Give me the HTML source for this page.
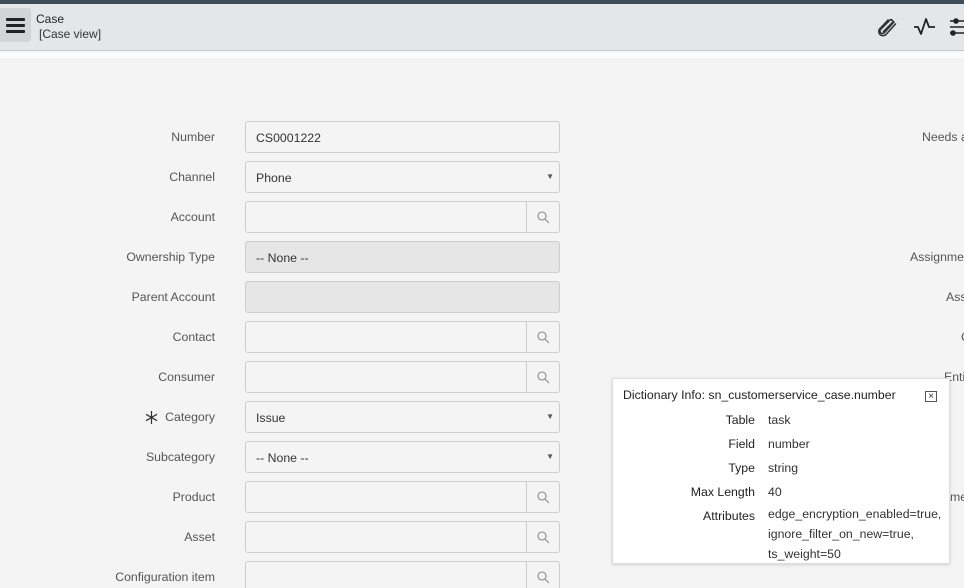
<!DOCTYPE html>
<html><head><meta charset="utf-8">
<style>
*{box-sizing:border-box;margin:0;padding:0}
html{width:964px;height:588px;overflow:hidden}
body{width:964px;height:588px;overflow:hidden;background:#f4f4f4;font-family:"Liberation Sans",sans-serif;position:relative;color:#444}
.top{position:absolute;left:0;top:0;width:964px;height:4px;background:#3f4d5b}
.hdr{position:absolute;left:0;top:4px;width:964px;height:47px;background:#e4e7ea;border-bottom:1px solid #c8c8c8}
.white{position:absolute;left:0;top:52px;width:964px;height:6px;background:#fbfbfb}
.ham{position:absolute;left:0;top:8px;width:31px;height:34px;background:#d2d4d6;border-radius:0 3px 3px 0}
.ham i{position:absolute;left:6px;width:19px;height:3px;background:#222;border-radius:1px}
.t1{position:absolute;left:36px;top:12px;font-size:12px;color:#222}
.t2{position:absolute;left:39px;top:27px;font-size:12px;color:#333}
.lbl{position:absolute;right:749px;font-size:12.3px;color:#555;text-align:right;white-space:nowrap}
.f{position:absolute;left:245px;width:315px;height:32px;border:1px solid #ccc;border-radius:3px;background:#f4f4f4;font-size:12.3px;color:#333;padding:9px 0 0 10px}
.f.ro{background:#e6e6e6}
.f .arr{position:absolute;right:5px;top:10px;font-size:8px;color:#555}
.f .sb{position:absolute;right:0;top:0;width:33px;height:30px;border-left:1px solid #ccc}
.rl{position:absolute;font-size:12.3px;color:#555;white-space:nowrap}
.rc{position:absolute;left:0;top:0;width:964px;height:588px;overflow:hidden}
.pop{position:absolute;left:612px;top:378px;width:338px;height:186px;background:#fff;border:1px solid #ddd;box-shadow:0 1px 3px rgba(0,0,0,.15)}
.pop .h{position:absolute;left:10px;top:9px;font-size:12.3px;color:#222}
.pop .x{position:absolute;left:312px;top:12px;width:12px;height:11px;border:1px solid #555;font-size:10px;line-height:9px;text-align:center;color:#333}
.pk{position:absolute;right:194px;font-size:12.3px;color:#222;text-align:right}
.pv{position:absolute;left:155px;font-size:12.3px;color:#333;line-height:20px}
</style></head><body>
<div class="top"></div>
<div class="hdr"></div>
<div class="white"></div>
<div class="ham"><i style="top:10px"></i><i style="top:16px"></i><i style="top:22px"></i></div>
<div class="t1">Case</div>
<div class="t2">[Case view]</div>
<svg style="position:absolute;left:876px;top:16px" width="24" height="24" viewBox="0 0 24 24" fill="none" stroke="#333" stroke-width="1.6" stroke-linecap="round"><path d="M18 6 L8 17 a2.5 2.5 0 0 1 -3.5 -3.5 L14 4 a1.8 1.8 0 0 1 2.5 2.5 L7.5 15.5"/><path d="M19.5 8 L10 18.5 a4 4 0 0 1 -6 -6 L12 4"/></svg>
<svg style="position:absolute;left:913px;top:16px" width="24" height="22" viewBox="0 0 24 22" fill="none" stroke="#222" stroke-width="1.8" stroke-linejoin="round"><path d="M1 11 L5 11 L8 18 L13 3 L16 11 L22 11"/></svg>
<svg style="position:absolute;left:950px;top:16px" width="14" height="22" viewBox="0 0 14 22" stroke="#222" stroke-width="1.6"><path d="M0 5 H14 M0 11 H14 M0 17 H14"/><circle cx="6" cy="5" r="2" fill="#222"/><circle cx="3" cy="17" r="2" fill="#222"/></svg>

<div class="lbl" style="top:130px">Number</div>
<div class="f" style="top:121px">CS0001222</div>
<div class="lbl" style="top:170px">Channel</div>
<div class="f" style="top:161px">Phone<span class="arr">▼</span></div>
<div class="lbl" style="top:210px">Account</div>
<div class="f" style="top:201px"><span class="sb"><svg style="position:absolute;left:10px;top:9px" width="13" height="13" viewBox="0 0 13 13" fill="none" stroke="#888" stroke-width="1.1"><circle cx="5" cy="5" r="4"/><path d="M8 8 L12 12"/></svg></span></div>
<div class="lbl" style="top:250px">Ownership Type</div>
<div class="f ro" style="top:241px">-- None --</div>
<div class="lbl" style="top:290px">Parent Account</div>
<div class="f ro" style="top:281px"></div>
<div class="lbl" style="top:330px">Contact</div>
<div class="f" style="top:321px"><span class="sb"><svg style="position:absolute;left:10px;top:9px" width="13" height="13" viewBox="0 0 13 13" fill="none" stroke="#888" stroke-width="1.1"><circle cx="5" cy="5" r="4"/><path d="M8 8 L12 12"/></svg></span></div>
<div class="lbl" style="top:370px">Consumer</div>
<div class="f" style="top:361px"><span class="sb"><svg style="position:absolute;left:10px;top:9px" width="13" height="13" viewBox="0 0 13 13" fill="none" stroke="#888" stroke-width="1.1"><circle cx="5" cy="5" r="4"/><path d="M8 8 L12 12"/></svg></span></div>
<svg style="position:absolute;left:145px;top:411px" width="13" height="13" viewBox="0 0 13 13" stroke="#333" stroke-width="1.2"><path d="M6.5 0 V13 M1 3.3 L12 9.7 M1 9.7 L12 3.3"/></svg>
<div class="lbl" style="top:410px">Category</div>
<div class="f" style="top:401px">Issue<span class="arr">▼</span></div>
<div class="lbl" style="top:450px">Subcategory</div>
<div class="f" style="top:441px">-- None --<span class="arr">▼</span></div>
<div class="lbl" style="top:490px">Product</div>
<div class="f" style="top:481px"><span class="sb"><svg style="position:absolute;left:10px;top:9px" width="13" height="13" viewBox="0 0 13 13" fill="none" stroke="#888" stroke-width="1.1"><circle cx="5" cy="5" r="4"/><path d="M8 8 L12 12"/></svg></span></div>
<div class="lbl" style="top:530px">Asset</div>
<div class="f" style="top:521px"><span class="sb"><svg style="position:absolute;left:10px;top:9px" width="13" height="13" viewBox="0 0 13 13" fill="none" stroke="#888" stroke-width="1.1"><circle cx="5" cy="5" r="4"/><path d="M8 8 L12 12"/></svg></span></div>
<div class="lbl" style="top:570px">Configuration item</div>
<div class="f" style="top:561px"><span class="sb"><svg style="position:absolute;left:10px;top:9px" width="13" height="13" viewBox="0 0 13 13" fill="none" stroke="#888" stroke-width="1.1"><circle cx="5" cy="5" r="4"/><path d="M8 8 L12 12"/></svg></span></div>

<div class="rc">
<div class="rl" style="left:922px;top:130px">Needs a</div>
<div class="rl" style="left:910px;top:250px">Assignme</div>
<div class="rl" style="left:946px;top:290px">Ass</div>
<div class="rl" style="left:961px;top:330px">C</div>
<div class="rl" style="left:944px;top:370px">Enti</div>
<div class="rl" style="left:950px;top:490px">me</div>
</div>

<div class="pop">
<div class="h">Dictionary Info: sn_customerservice_case.number</div>
<div class="x">×</div>
<div class="pk" style="top:34px">Table</div><div class="pv" style="top:31px">task</div>
<div class="pk" style="top:58px">Field</div><div class="pv" style="top:55px">number</div>
<div class="pk" style="top:82px">Type</div><div class="pv" style="top:79px">string</div>
<div class="pk" style="top:106px">Max Length</div><div class="pv" style="top:103px">40</div>
<div class="pk" style="top:130px">Attributes</div><div class="pv" style="top:125px">edge_encryption_enabled=true,<br>ignore_filter_on_new=true,<br>ts_weight=50</div>
</div>
</body></html>
